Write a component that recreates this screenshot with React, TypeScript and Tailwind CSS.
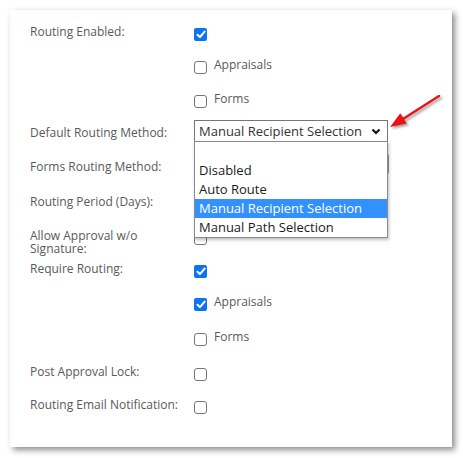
import React from "react"

const font = "font-['Open_Sans',sans-serif]"

function Box({ checked = false, className = "" }: { checked?: boolean; className?: string }) {
  if (checked) {
    return (
      <span className={`flex h-[13px] w-[13px] shrink-0 items-center justify-center rounded-[2px] bg-[#0b75f0] ${className}`}>
        <svg width="10" height="9" viewBox="0 0 10 9">
          <path d="M1.5 4.8 L3.9 7.1 L8.6 1.6" fill="none" stroke="white" strokeWidth="2" strokeLinecap="round" strokeLinejoin="round" />
        </svg>
      </span>
    )
  }
  return <span className={`block h-[13px] w-[13px] shrink-0 rounded-[3px] border border-[#767676] bg-white ${className}`} />
}

function Row({ label, h, children }: { label?: React.ReactNode; h: string; children?: React.ReactNode }) {
  return (
    <div className={`flex ${h}`}>
      <div className="w-[164px] shrink-0 text-[12px] leading-[16px] text-[#595959]">{label}</div>
      <div className="flex-1">{children}</div>
    </div>
  )
}

function Option({ text, checked = false }: { text: string; checked?: boolean }) {
  return (
    <div className="flex items-start gap-[7px] text-[12px] leading-[16px] text-[#595959]">
      <Box checked={checked} className="mt-[4px]" />
      <span>{text}</span>
    </div>
  )
}

export default function App() {
  const options = ["", "Disabled", "Auto Route", "Manual Recipient Selection", "Manual Path Selection"]
  return (
    <div className={`h-[458px] w-[463px] bg-white p-[10px] ${font}`}>
      <div className="relative h-[437px] w-[442px] bg-white pl-[20px] pt-[14px] shadow-[3px_3px_6px_rgba(0,0,0,0.45)]">
        <Row label="Routing Enabled:" h="h-[33px]">
          <Box checked className="mt-[4px]" />
        </Row>
        <Row h="h-[34px]">
          <Option text="Appraisals" />
        </Row>
        <Row h="h-[34px]">
          <Option text="Forms" />
        </Row>
        <Row label="Default Routing Method:" h="h-[34px]">
          <div className="mt-[-5px] flex h-[22px] w-[194px] items-center justify-between border border-[#767676] bg-white pl-[4px] pr-[6px] text-[13px] leading-[18px] text-[#333]">
            <span>Manual Recipient Selection</span>
            <svg width="10" height="7" viewBox="0 0 10 7">
              <path d="M1.5 1.5 L5 5 L8.5 1.5" fill="none" stroke="#111" strokeWidth="2.2" />
            </svg>
          </div>
        </Row>
        <Row label="Forms Routing Method:" h="h-[35px]">
          <div className="mt-[-5px] h-[20px] w-[195px] rounded-[2px] border-r-[3px] border-[#9a9a9a] bg-white" />
        </Row>
        <Row label="Routing Period (Days):" h="h-[34px]">
          <div className="mt-[-3px] h-[20px] w-[60px] border border-[#767676] bg-white" />
        </Row>
        <Row label={<div className="mt-[1px] leading-[13px]">Allow Approval w/o<br />Signature:</div>} h="h-[33px]">
          <Box className="mt-[4px]" />
        </Row>
        <Row label="Require Routing:" h="h-[33px]">
          <Box checked className="mt-[4px]" />
        </Row>
        <Row h="h-[35px]">
          <Option text="Appraisals" checked />
        </Row>
        <Row h="h-[35px]">
          <Option text="Forms" />
        </Row>
        <Row label="Post Approval Lock:" h="h-[33px]">
          <Box className="mt-[4px]" />
        </Row>
        <Row label="Routing Email Notification:" h="h-[33px]">
          <Box className="mt-[4px]" />
        </Row>

        <div className="absolute left-[184px] top-[131px] w-[194px] border border-[#8a8a8a] bg-white shadow-[1px_2px_3px_rgba(0,0,0,0.25)]">
          {options.map((o, i) => (
            <div
              key={i}
              className={`h-[19px] pl-[4px] text-[13px] leading-[19px] ${i === 3 ? "bg-[#3390ff] text-white" : "text-[#1a1a1a]"}`}
            >
              {o}
            </div>
          ))}
        </div>

        <svg
          className="absolute left-[375px] top-[78px] drop-shadow-[2px_2px_1px_rgba(0,0,0,0.35)]"
          width="65"
          height="50"
          viewBox="0 0 65 50"
        >
          <line x1="54" y1="8" x2="18" y2="31" stroke="#ee1111" strokeWidth="2.5" strokeLinecap="round" />
          <polygon points="5,39 15.3,25.3 21.7,35.5" fill="#ee1111" />
        </svg>
      </div>
    </div>
  )
}
